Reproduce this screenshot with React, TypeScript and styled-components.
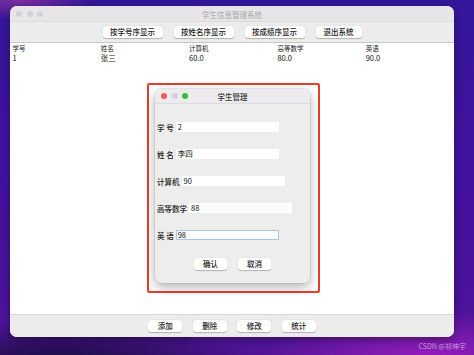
import React from 'react';
import styled, { createGlobalStyle } from 'styled-components';

const GlobalStyle = createGlobalStyle`
  html, body {
    margin: 0;
    padding: 0;
  }
  body {
    width: 474px;
    height: 355px;
    overflow: hidden;
    font-family: "Noto Sans CJK SC", "Noto Sans", sans-serif;
    background:
      radial-gradient(ellipse 170px 45px at 430px 355px, rgba(155, 30, 190, 0.9), rgba(155, 30, 190, 0) 100%),
      radial-gradient(ellipse 200px 40px at 60px 362px, rgba(20, 12, 55, 0.95), rgba(20, 12, 55, 0) 100%),
      radial-gradient(ellipse 70px 20px at 20px 0px, rgba(140, 50, 160, 0.85), rgba(140, 50, 160, 0) 100%),
      linear-gradient(180deg, #34179a 0%, #43129f 55%, #501498 100%);
  }
`;

const columns = ['学号', '姓名', '计算机', '高等数学', '英语'];
const rows = [['1', '张三', '60.0', '80.0', '90.0']];

const fields = [
  { label: '学 号', value: '2' },
  { label: '姓 名', value: '李四' },
  { label: '计算机', value: '90' },
  { label: '高等数学', value: '88' },
  { label: '英 语', value: '98', focused: true },
];

export default function App() {
  return (
    <Desktop>
      <GlobalStyle />
      <Window>
        <TitleBar>
          <Lights>
            <Light $color="#d3d1d4" />
            <Light $color="#d3d1d4" />
            <Light $color="#d3d1d4" />
          </Lights>
          <Title>学生信息管理系统</Title>
        </TitleBar>
        <Toolbar>
          <ToolButton $width={60}>按学号序显示</ToolButton>
          <ToolButton $width={60}>按姓名序显示</ToolButton>
          <ToolButton $width={60}>按成绩序显示</ToolButton>
          <ToolButton $width={46}>退出系统</ToolButton>
        </Toolbar>
        <TableArea>
          <Grid>
            {columns.map((c) => (
              <HeadCell key={c}>{c}</HeadCell>
            ))}
            {rows.map((r) =>
              r.map((v, i) => <Cell key={i}>{v}</Cell>)
            )}
          </Grid>

          <Highlight>
            <Dialog>
              <DialogTitleBar>
                <Lights>
                  <Light $color="#ee5b54" />
                  <Light $color="#d4d2d5" />
                  <Light $color="#2ec23e" />
                </Lights>
                <DialogTitle>学生管理</DialogTitle>
              </DialogTitleBar>
              <DialogBody>
                {fields.map((f) => (
                  <FieldRow key={f.label}>
                    <FieldLabel>{f.label}</FieldLabel>
                    <FieldInput $focused={f.focused}>{f.value}</FieldInput>
                  </FieldRow>
                ))}
                <DialogButtons>
                  <ToolButton $width={33}>确认</ToolButton>
                  <ToolButton $width={33}>取消</ToolButton>
                </DialogButtons>
              </DialogBody>
            </Dialog>
          </Highlight>
        </TableArea>
        <BottomBar>
          <ToolButton $width={34}>添加</ToolButton>
          <ToolButton $width={34}>删除</ToolButton>
          <ToolButton $width={34}>修改</ToolButton>
          <ToolButton $width={34}>统计</ToolButton>
        </BottomBar>
      </Window>
      <Watermark>CSDN @祁坤宇</Watermark>
    </Desktop>
  );
}

const Desktop = styled.div`
  position: relative;
  width: 474px;
  height: 355px;
  box-sizing: border-box;
  padding: 6px 0 0 10px;
`;

const Window = styled.div`
  width: 444px;
  height: 331px;
  display: flex;
  flex-direction: column;
  border-radius: 7px;
  overflow: hidden;
  background: #ececec;
  box-shadow: 0 3px 10px rgba(0, 0, 0, 0.35);
`;

const TitleBar = styled.div`
  position: relative;
  height: 16px;
  flex: none;
  display: flex;
  align-items: center;
  justify-content: center;
  background: #e7e5e8;
  border-bottom: 1px solid #dcdadc;
  box-sizing: border-box;
`;

const Lights = styled.div`
  position: absolute;
  left: 6px;
  top: 50%;
  transform: translateY(-50%);
  display: flex;
  gap: 4.5px;
`;

const Light = styled.span<{ $color: string }>`
  width: 6px;
  height: 6px;
  border-radius: 50%;
  background: ${(p) => p.$color};
`;

const Title = styled.div`
  font-size: 7.5px;
  color: #a8a6aa;
  padding-top: 1px;
`;

const Toolbar = styled.div`
  height: 21px;
  flex: none;
  display: flex;
  align-items: center;
  justify-content: center;
  gap: 11px;
  background: #ececec;
  border-bottom: 1px solid #c6c6c6;
  box-sizing: border-box;
`;

const ToolButton = styled.div<{ $width: number }>`
  width: ${(p) => p.$width}px;
  height: 12px;
  display: flex;
  align-items: center;
  justify-content: center;
  background: #ffffff;
  border-radius: 3px;
  box-shadow: 0 0.5px 1px rgba(0, 0, 0, 0.25);
  font-size: 7.5px;
  font-weight: 500;
  color: #1a1a1a;
  line-height: 1;
`;

const TableArea = styled.div`
  position: relative;
  flex: 1;
  background: #ffffff;
`;

const Grid = styled.div`
  display: grid;
  grid-template-columns: repeat(5, 1fr);
  padding: 1px 0 0 2.5px;
  grid-auto-rows: 9px;
`;

const HeadCell = styled.div`
  font-size: 6.5px;
  line-height: 9px;
  color: #222;
`;

const Cell = styled.div`
  font-size: 7.5px;
  line-height: 9px;
  color: #111;
`;

const Highlight = styled.div`
  position: absolute;
  left: 137px;
  top: 40px;
  width: 173px;
  height: 210px;
  box-sizing: border-box;
  border: 2px solid #e63f2b;
  border-radius: 2px;
  padding: 4px 0 0 6px;
`;

const Dialog = styled.div`
  width: 155px;
  height: 194px;
  display: flex;
  flex-direction: column;
  border-radius: 6px;
  overflow: hidden;
  background: #ededed;
  box-shadow: 0 4px 12px rgba(0, 0, 0, 0.3), 0 0 0 0.5px rgba(0, 0, 0, 0.12);
`;

const DialogTitleBar = styled.div`
  position: relative;
  height: 15px;
  flex: none;
  display: flex;
  align-items: center;
  justify-content: center;
  background: #eeebef;
  border-bottom: 1px solid #dedbe0;
  box-sizing: border-box;
`;

const DialogTitle = styled.div`
  font-size: 7.5px;
  font-weight: 500;
  color: #333;
`;

const DialogBody = styled.div`
  display: flex;
  flex-direction: column;
  gap: 17px;
  padding: 18px 0 0 2px;
`;

const FieldRow = styled.div`
  display: flex;
  align-items: center;
  gap: 2px;
  height: 10px;
`;

const FieldLabel = styled.div`
  font-size: 7.5px;
  font-weight: 500;
  color: #222;
  white-space: pre;
`;

const FieldInput = styled.div<{ $focused?: boolean }>`
  width: 103px;
  height: 10px;
  box-sizing: border-box;
  background: #ffffff;
  border: 1px solid ${(p) => (p.$focused ? '#a8c6ec' : '#ffffff')};
  font-size: 7.5px;
  line-height: 8px;
  padding-left: 1px;
  color: #111;
`;

const DialogButtons = styled.div`
  display: flex;
  justify-content: center;
  gap: 11px;
  margin-top: 1px;
  padding-right: 2px;
`;

const BottomBar = styled.div`
  height: 23px;
  flex: none;
  display: flex;
  align-items: center;
  justify-content: center;
  gap: 10.5px;
  background: #ececec;
  border-top: 1px solid #d6d6d6;
  box-sizing: border-box;
`;

const Watermark = styled.div`
  position: absolute;
  right: 8px;
  bottom: 4px;
  font-size: 7px;
  color: rgba(255, 255, 255, 0.55);
  font-family: "Noto Sans CJK SC", "Liberation Sans", sans-serif;
`;
